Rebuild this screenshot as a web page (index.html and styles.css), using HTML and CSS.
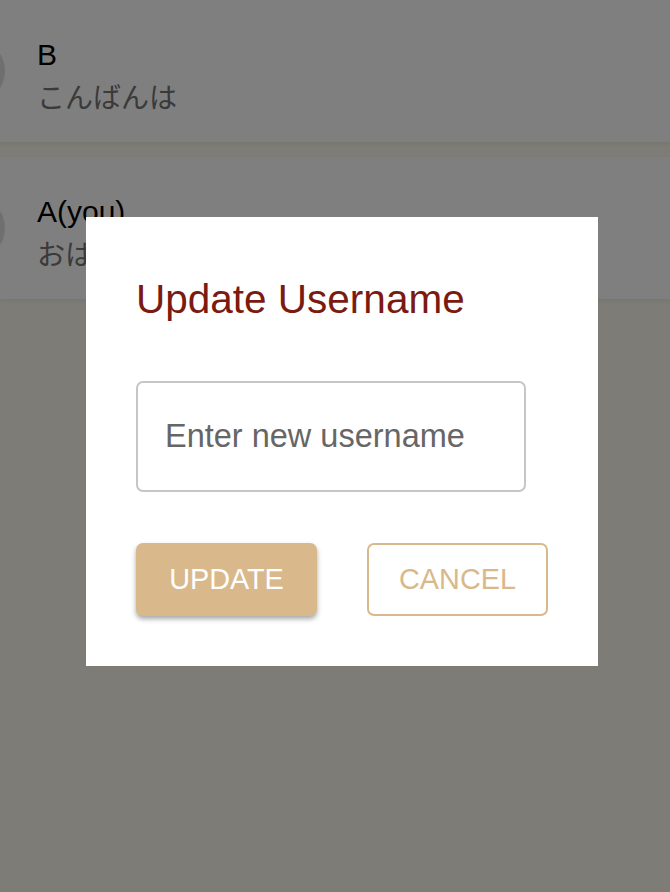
FILE: index.html
```html
<!DOCTYPE html>
<html lang="ja">
<head>
<meta charset="utf-8">
<title>Update Username</title>
<link rel="stylesheet" href="styles.css">
</head>
<body>
<div class="list">
  <div class="row">
    <div class="avatar"></div>
    <div class="text">
      <div class="name">B</div>
      <div class="msg">こんばんは</div>
    </div>
  </div>
  <div class="row">
    <div class="avatar"></div>
    <div class="text">
      <div class="name">A(you)</div>
      <div class="msg">おはよう</div>
    </div>
  </div>
</div>
<div class="overlay">
  <div class="modal">
    <h2 class="title">Update Username</h2>
    <input class="field" type="text" placeholder="Enter new username">
    <div class="actions">
      <button class="btn btn-primary">UPDATE</button>
      <button class="btn btn-outline">CANCEL</button>
    </div>
  </div>
</div>
</body>
</html>
```
FILE: styles.css
```css
html, body {
  margin: 0;
  padding: 0;
}
body {
  width: 670px;
  height: 892px;
  overflow: hidden;
  background: #fbf8ec;
  font-family: "Liberation Sans", "Noto Sans CJK JP", sans-serif;
}
.list {
  display: flex;
  flex-direction: column;
  gap: 15px;
}
.row {
  height: 142px;
  background: #ffffff;
  display: flex;
  align-items: center;
  overflow: hidden;
  box-shadow: 0 2px 4px rgba(0,0,0,0.06);
}
.avatar {
  flex: none;
  width: 64px;
  height: 64px;
  border-radius: 50%;
  background: #dedede;
  margin-left: -59px;
  margin-right: 32px;
}
.text {
  display: flex;
  flex-direction: column;
  padding-top: 8px;
}
.name {
  font-size: 30px;
  line-height: 34px;
  color: #000;
}
.msg {
  font-family: "Noto Sans CJK JP", sans-serif;
  font-size: 28px;
  line-height: 34px;
  margin-top: 7px;
  color: #747474;
}
.overlay {
  position: fixed;
  inset: 0;
  background: rgba(0,0,0,0.5);
  display: flex;
  align-items: flex-start;
  padding: 217px 0 0 86px;
}
.modal {
  width: 512px;
  box-sizing: border-box;
  background: #fff;
  padding: 50px;
  display: flex;
  flex-direction: column;
  align-items: flex-start;
}
.title {
  margin: 9px 0 0 0;
  font-size: 40.5px;
  line-height: 46px;
  font-weight: normal;
  color: #7b1a10;
}
.field {
  margin-top: 59px;
  width: 390px;
  height: 111px;
  box-sizing: border-box;
  border: 2px solid #c6c6c6;
  border-radius: 7px;
  padding: 0 0 0 27px;
  font-family: "Liberation Sans", sans-serif;
  font-size: 32.5px;
  color: #333;
  outline: none;
}
.field::placeholder {
  color: #666;
}
.actions {
  margin-top: 51px;
  display: flex;
  gap: 50px;
}
.btn {
  width: 181px;
  height: 73px;
  box-sizing: border-box;
  border-radius: 7px;
  font-family: "Liberation Sans", sans-serif;
  font-size: 28.8px;
  padding: 0;
  cursor: pointer;
}
.btn-primary {
  background: #d9b98b;
  color: #fff;
  border: none;
  box-shadow: 0 3px 5px rgba(0,0,0,0.35);
}
.btn-outline {
  background: #fff;
  color: #d9b98b;
  border: 2px solid #d9b98b;
}
```
